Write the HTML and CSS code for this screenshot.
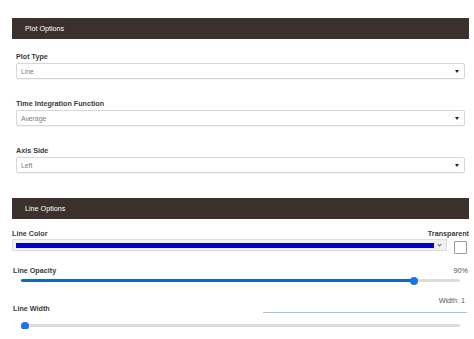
FILE: index.html
```html
<!DOCTYPE html>
<html lang="en">
<head>
    <meta charset="UTF-8">
    <meta name="viewport" content="width=device-width, initial-scale=1.0">
    <title>Plot Options</title>
    <link rel="stylesheet" href="styles.css">
</head>
<body>
    <div class="panel">
        <div class="section-head">Plot Options</div>

        <div class="plot-fields">
            <div class="field">
                <label>Plot Type</label>
                <div class="select"><span>Line</span><span class="caret"></span></div>
            </div>
            <div class="field">
                <label>Time Integration Function</label>
                <div class="select"><span>Average</span><span class="caret"></span></div>
            </div>
            <div class="field">
                <label>Axis Side</label>
                <div class="select"><span>Left</span><span class="caret"></span></div>
            </div>
        </div>

        <div class="section-head line-head">Line Options</div>

        <div class="line-fields">
            <div class="row">
                <label>Line Color</label>
                <label>Transparent</label>
            </div>
            <div class="row color-row">
                <div class="color-select">
                    <div class="swatch"></div>
                    <span class="chevron"></span>
                </div>
                <div class="checkbox"></div>
            </div>

            <div class="row opacity-row">
                <label>Line Opacity</label>
                <span class="value">90%</span>
            </div>
            <div class="slider">
                <div class="track">
                    <div class="fill" style="width: 89.5%"></div>
                    <div class="thumb" style="left: 89.5%"></div>
                </div>
            </div>

            <div class="row width-value">
                <span class="value">Width: 1</span>
            </div>
            <div class="row width-row">
                <label>Line Width</label>
                <div class="underline"></div>
            </div>
            <div class="slider">
                <div class="track">
                    <div class="thumb" style="left: 0.9%"></div>
                </div>
            </div>
        </div>
    </div>
</body>
</html>
```

FILE: styles.css
```css
body {
    font-family: "Liberation Sans", Arial, sans-serif;
    background-color: #fff;
    margin: 0;
    padding: 0;
}
.panel {
    padding: 18px 5px 0 12px;
}
.section-head {
    height: 21px;
    line-height: 21px;
    padding-left: 13px;
    background-color: #3b302c;
    color: #fff;
    font-size: 7.2px;
}
label {
    font-size: 7.2px;
    font-weight: bold;
    color: #3a3a3a;
    line-height: 10px;
}
.plot-fields {
    display: flex;
    flex-direction: column;
    gap: 20px;
    padding: 13px 4px 0 4px;
}
.field label {
    display: block;
    margin-bottom: 1px;
}
.select {
    height: 14px;
    border: 1px solid #d6d6d6;
    border-radius: 2px;
    box-shadow: 0 1px 1px rgba(0, 0, 0, 0.05);
    display: flex;
    align-items: center;
    justify-content: space-between;
    padding: 0 5px 0 4px;
    font-size: 6.8px;
    color: #808080;
}
.caret {
    width: 0;
    height: 0;
    border-left: 2.5px solid transparent;
    border-right: 2.5px solid transparent;
    border-top: 3px solid #222;
}
.line-head {
    margin-top: 25px;
}
.line-fields {
    padding-top: 10px;
}
.row {
    display: flex;
    justify-content: space-between;
    align-items: center;
}
.color-row {
    align-items: flex-start;
}
.color-select {
    flex: 1;
    height: 10px;
    background-color: #f1f1f1;
    border: 1px solid #ddd;
    display: flex;
    align-items: center;
    padding: 0 4px 0 3px;
    gap: 3px;
}
.swatch {
    flex: 1;
    height: 5px;
    background-color: #0000c8;
}
.chevron {
    width: 2px;
    height: 2px;
    border-right: 1px solid #666;
    border-bottom: 1px solid #666;
    transform: rotate(45deg);
    margin: 0 1px 2px 1px;
}
.checkbox {
    width: 11px;
    height: 11px;
    border: 1px solid #9a9a9a;
    border-radius: 1px;
    margin: 2px 2px 0 7px;
}
.opacity-row {
    margin-top: 12px;
    padding: 0 1px;
}
.value {
    font-size: 7.2px;
    color: #555;
    line-height: 10px;
}
.slider {
    padding: 3px 9px 0 9px;
    height: 5px;
}
.track {
    position: relative;
    height: 3px;
    border-radius: 2px;
    background-color: #dcdcdc;
}
.fill {
    height: 3px;
    border-radius: 2px;
    background-color: #1565c8;
}
.thumb {
    position: absolute;
    top: -2.5px;
    width: 8px;
    height: 8px;
    margin-left: -4px;
    border-radius: 50%;
    background-color: #1a73e8;
}
.width-value {
    justify-content: flex-end;
    margin-top: 12px;
    padding-right: 4px;
}
.width-row {
    align-items: flex-end;
    padding-left: 1px;
    margin-top: -2px;
}
.underline {
    width: 204px;
    border-bottom: 1px solid #a8c4dc;
    margin-bottom: 1px;
    margin-right: 2px;
}
.width-row + .slider {
    padding-top: 10px;
}
```
